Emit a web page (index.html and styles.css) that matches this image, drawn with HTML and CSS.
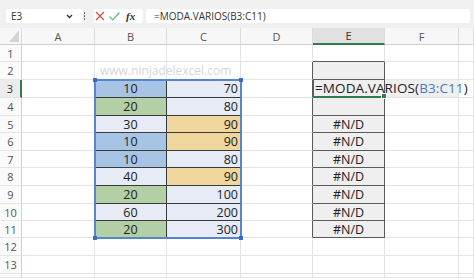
FILE: index.html
```html
<!DOCTYPE html>
<html lang="es">
<head>
<meta charset="utf-8">
<link rel="stylesheet" href="styles.css">
</head>
<body>
<div class="app">
  <div class="toolbar">
    <div class="namebox"><span>E3</span>
      <svg class="chev" width="7" height="5" viewBox="0 0 7 5"><path d="M1 1 L3.5 3.5 L6 1" fill="none" stroke="#333" stroke-width="1.3"/></svg>
    </div>
    <div class="dots"><i></i><i></i><i></i></div>
    <div class="fxbox">
      <svg width="12" height="12" viewBox="0 0 12 12"><path d="M2 2 L10 10 M10 2 L2 10" stroke="#e0454a" stroke-width="1.2" fill="none"/></svg>
      <svg width="13" height="12" viewBox="0 0 13 12"><path d="M1.5 6.5 L4.8 9.8 L11.5 2.5" stroke="#5cb87a" stroke-width="1.2" fill="none"/></svg>
      <span class="fx">fx</span>
    </div>
    <div class="formula">=MODA.VARIOS(B3:C11)</div>
  </div>
  <div class="sheet">
    <!-- header -->
    <div class="c hd corner"><svg width="10" height="12" viewBox="0 0 10 12"><path d="M10 0 L10 12 L0 12 Z" fill="#d4d4d4"/></svg></div>
    <div class="c hd">A</div><div class="c hd">B</div><div class="c hd">C</div><div class="c hd">D</div><div class="c hd hd-act">E</div><div class="c hd">F</div><div class="c hd"></div>
    <!-- 1 -->
    <div class="c rh">1</div><div class="c"></div><div class="c"></div><div class="c"></div><div class="c"></div><div class="c e-top"></div><div class="c"></div><div class="c"></div>
    <!-- 2 -->
    <div class="c rh">2</div><div class="c"></div><div class="c wm"><span>www.ninjadelexcel.com</span></div><div class="c"></div><div class="c d-edge"></div><div class="c ecell"></div><div class="c"></div><div class="c"></div>
    <!-- 3 -->
    <div class="c rh rh-act">3</div><div class="c"></div><div class="c r b ctr">10</div><div class="c r w rt">70</div><div class="c d-edge"></div><div class="c ecell active"><span class="ftxt">=MODA.VARIOS(<span class="ref">B3:C11</span>)</span><i class="handle"></i></div><div class="c editor"></div><div class="c"></div>
    <!-- 4 -->
    <div class="c rh">4</div><div class="c"></div><div class="c r g ctr">20</div><div class="c r w rt">80</div><div class="c d-edge"></div><div class="c ecell"></div><div class="c"></div><div class="c"></div>
    <!-- 5 -->
    <div class="c rh">5</div><div class="c"></div><div class="c r w ctr">30</div><div class="c r y rt">90</div><div class="c d-edge"></div><div class="c ecell ctr">#N/D</div><div class="c"></div><div class="c"></div>
    <!-- 6 -->
    <div class="c rh">6</div><div class="c"></div><div class="c r b ctr">10</div><div class="c r y rt">90</div><div class="c d-edge"></div><div class="c ecell ctr">#N/D</div><div class="c"></div><div class="c"></div>
    <!-- 7 -->
    <div class="c rh">7</div><div class="c"></div><div class="c r b ctr">10</div><div class="c r w rt">80</div><div class="c d-edge"></div><div class="c ecell ctr">#N/D</div><div class="c"></div><div class="c"></div>
    <!-- 8 -->
    <div class="c rh">8</div><div class="c"></div><div class="c r w ctr">40</div><div class="c r y rt">90</div><div class="c d-edge"></div><div class="c ecell ctr">#N/D</div><div class="c"></div><div class="c"></div>
    <!-- 9 -->
    <div class="c rh">9</div><div class="c"></div><div class="c r g ctr">20</div><div class="c r w rt">100</div><div class="c d-edge"></div><div class="c ecell ctr">#N/D</div><div class="c"></div><div class="c"></div>
    <!-- 10 -->
    <div class="c rh">10</div><div class="c"></div><div class="c r w ctr">60</div><div class="c r w rt">200</div><div class="c d-edge"></div><div class="c ecell ctr">#N/D</div><div class="c"></div><div class="c"></div>
    <!-- 11 -->
    <div class="c rh">11</div><div class="c"></div><div class="c r g ctr">20</div><div class="c r w rt">300</div><div class="c d-edge"></div><div class="c ecell ctr">#N/D</div><div class="c"></div><div class="c"></div>
    <!-- 12 -->
    <div class="c rh">12</div><div class="c"></div><div class="c"></div><div class="c"></div><div class="c"></div><div class="c"></div><div class="c"></div><div class="c"></div>
    <!-- 13 -->
    <div class="c rh">13</div><div class="c"></div><div class="c"></div><div class="c"></div><div class="c"></div><div class="c"></div><div class="c"></div><div class="c"></div>
    <!-- 14 -->
    <div class="c rh"></div><div class="c"></div><div class="c"></div><div class="c"></div><div class="c"></div><div class="c"></div><div class="c"></div><div class="c"></div>

    <div class="range"><i class="k tl"></i><i class="k tr"></i><i class="k bl"></i><i class="k br"></i></div>
  </div>
</div>
</body>
</html>
```
FILE: styles.css
```css
* { box-sizing: border-box; }
html, body { margin: 0; padding: 0; }
body {
  width: 474px; height: 278px; overflow: hidden;
  font-family: "Open Sans", "Noto Sans", sans-serif;
  background: #fff;
}
.app { width: 474px; height: 278px; display: flex; flex-direction: column; }

.toolbar {
  height: 28px; flex: none;
  background: #f0f0f0;
  display: flex; align-items: flex-start;
  padding: 9px 4px 0 6px;
}
.namebox {
  width: 77px; height: 14px; background: #fff; border-radius: 3px;
  display: flex; align-items: center; justify-content: space-between;
  padding: 0 10px 0 5px;
  font-size: 10px; color: #333;
}
.chev { display: block; }
.dots { width: 7px; height: 14px; margin: 0 0 0 -2px; display: flex; flex-direction: column; justify-content: center; align-items: center; gap: 1.5px; }
.dots i { width: 1.5px; height: 1.5px; background: #555; display: block; border-radius: 50%; }
.fxbox {
  margin-left: 6px; width: 49px; height: 14px; background: #fff; border-radius: 3px;
  display: flex; align-items: center; gap: 2px; padding-left: 0;
}
.fx { font-family: "Liberation Serif", serif; font-style: italic; font-size: 11px; color: #333; margin-left: 3px; font-weight: bold; }
.formula {
  margin-left: 3px; flex: 1; height: 14px; background: #fff; border-radius: 3px;
  font-size: 10px; color: #333; line-height: 14px; padding-left: 8px;
}

.sheet {
  position: relative; flex: 1;
  display: grid;
  grid-template-columns: 22px 73px 72px 74px 72px 72px 74px 1fr;
  grid-template-rows: 17px 17px 18px 18px 18px 17px 18px 17px 18px 18px 17px 17px 18px 18px 1fr;
  font-size: 12.5px; color: #222;
}
.c {
  border-right: 1px solid #e3e3e3; border-bottom: 1px solid #e3e3e3;
  display: flex; align-items: center; white-space: nowrap; min-width: 0;
}
.hd {
  background: #f7f7f7; border-right-color: #dcdcdc; border-bottom-color: #cfcfcf;
  justify-content: center; font-size: 11px; color: #555;
}
.hd-act { background: #e1e1e1; border-bottom: 2px solid #2e7d4f; color: #333; }
.corner { justify-content: flex-end; align-items: flex-end; padding: 0 2px 2px 0; }
.corner svg { display: block; }
.rh {
  background: #fafafa; border-right-color: #d2d2d2; border-bottom-color: #e6e6e6;
  justify-content: center; font-size: 11px; color: #555;
}
.rh-act { border-right: 2px solid #2e7d4f; background: #ececec; color: #333; }

.wm { overflow: visible; padding-left: 5px; }
.wm span { color: #d6d6d6; font-size: 12px; position: relative; z-index: 1; }

.r { border-right-color: #3a3a3a; border-bottom-color: #3a3a3a; }
.b { background: #a8c4e4; }
.g { background: #b3cfa6; }
.y { background: #eed69c; }
.w { background: #e6ebf5; }
.ctr { justify-content: center; }
.rt { justify-content: flex-end; padding-right: 2px; }

.e-top { border-bottom-color: #5a5a5a; }
.d-edge { border-right-color: #5a5a5a; }
.ecell { background: #efefef; border-right-color: #5a5a5a; border-bottom-color: #5a5a5a; }
.active {
  position: relative; overflow: visible; z-index: 2;
  border-bottom: 2px solid #2e7d4f;
  box-shadow: inset 1px 0 0 #2e7d4f;
  padding-left: 2px;
}
.ftxt { font-size: 13.5px; color: #222; letter-spacing: 0.1px; }
.ref { color: #4a78c8; }
.handle { position: absolute; right: -3px; bottom: -3px; width: 4px; height: 4px; background: #2e7d4f; border: 1px solid #fff; box-sizing: content-box; display: block; }
.editor { background: #efefef; }

.range {
  position: absolute; left: 94px; top: 51px; width: 148px; height: 160px;
  border: 2px solid #5684d0; pointer-events: none;
}
.k { position: absolute; width: 4px; height: 4px; background: #3c6cc0; display: block; }
.k.tl { left: -3px; top: -3px; }
.k.tr { right: -3px; top: -3px; }
.k.bl { left: -3px; bottom: -3px; }
.k.br { right: -3px; bottom: -3px; }
```
